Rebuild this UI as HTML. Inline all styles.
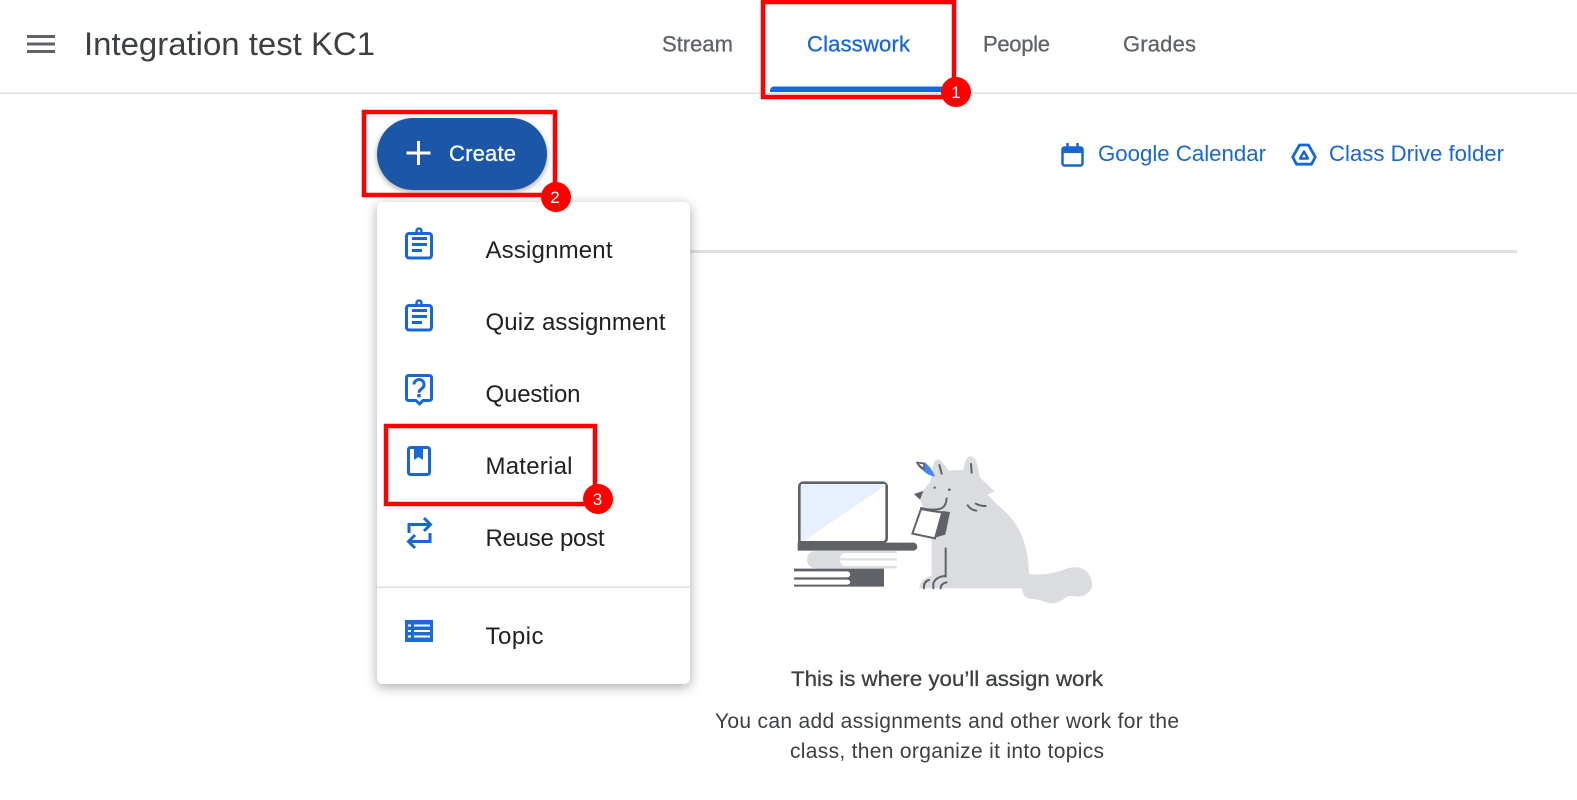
<!DOCTYPE html>
<html><head><meta charset="utf-8"><style>
html,body{margin:0;padding:0;background:#fff;width:1577px;height:800px;overflow:hidden}
svg{display:block}
text{font-family:"Liberation Sans",sans-serif}
.m{stroke-width:.3px}
</style></head><body>
<svg width="1577" height="800" viewBox="0 0 1577 800" xmlns="http://www.w3.org/2000/svg">
<defs>
<g id="clip"><rect x="406.500" y="233.500" width="25" height="24.500" rx="2.500" fill="none" stroke="#1967d2" stroke-width="3"/><circle cx="419" cy="231" r="2.500" fill="#fff" stroke="#1967d2" stroke-width="2.500"/><path d="M412 238.500h15M412 244.500h15M412 250.500h10" stroke="#1967d2" stroke-width="3" fill="none"/></g>
</defs>
<rect x="0" y="92.500" width="1577" height="1.500" fill="#e0e0e0"/>
<path d="M27 36.500h28M27 44h28M27 51.500h28" stroke="#5f6368" stroke-width="3" fill="none"/>
<text x="84" y="55" font-size="32" fill="#3c4043" textLength="291" lengthAdjust="spacingAndGlyphs">Integration test KC1</text>
<g font-size="22" fill="#5f6368" stroke="#5f6368" class="m">
<text x="662" y="51.500" textLength="71">Stream</text>
<text x="983" y="51.500" textLength="67">People</text>
<text x="1123" y="51.500" textLength="73">Grades</text>
</g>
<text x="807" y="51.500" font-size="22" fill="#1967d2" stroke="#1967d2" class="m" textLength="103">Classwork</text>
<path d="M770 92v-1.500a4 4 0 0 1 4-4h176v5.500z" fill="#1967d2"/>

<rect x="377" y="118" width="170" height="72" rx="36" fill="#1c57a7" style="filter:drop-shadow(0 2px 3px rgba(60,64,67,.45))"/>
<path d="M418.500 141v24M406.500 153h24" stroke="#fff" stroke-width="3" fill="none"/>
<text x="449" y="161" font-size="22" fill="#fff" stroke="#fff" class="m" textLength="67">Create</text>

<path d="M1062.500 149.500a2 2 0 0 1 2-2h16a2 2 0 0 1 2 2v14a2 2 0 0 1-2 2h-16a2 2 0 0 1-2-2z" fill="none" stroke="#1967d2" stroke-width="2.500"/>
<rect x="1062" y="147" width="21" height="6" fill="#1967d2"/>
<path d="M1067.500 143v5M1077.500 143v5" stroke="#1967d2" stroke-width="2.500"/>
<text x="1098" y="161" font-size="22.500" fill="#1967d2" textLength="168" lengthAdjust="spacingAndGlyphs">Google Calendar</text>
<path d="M1299.500 145h9l6.800 12-3.800 7.200h-15l-3.800-7.200z" fill="none" stroke="#1967d2" stroke-width="2.800" stroke-linejoin="round"/>
<path d="M1304 151.500l4 7h-8z" fill="none" stroke="#1967d2" stroke-width="2.400" stroke-linejoin="round"/>
<text x="1329" y="161" font-size="22.500" fill="#1967d2" textLength="175" lengthAdjust="spacingAndGlyphs">Class Drive folder</text>

<rect x="690" y="250" width="827" height="3" fill="#e0e0e0"/>

<rect x="377" y="202" width="313" height="482" rx="6" fill="#fff" style="filter:drop-shadow(0 3px 6px rgba(60,64,67,.45))"/>
<rect x="377" y="586.500" width="313" height="1.500" fill="#e0e0e0"/>
<g font-size="24" fill="#202124">
<text x="485.500" y="258" textLength="127">Assignment</text>
<text x="485.500" y="330" textLength="180">Quiz assignment</text>
<text x="485.500" y="402" textLength="95">Question</text>
<text x="485.500" y="474" textLength="87">Material</text>
<text x="485.500" y="546" textLength="119">Reuse post</text>
<text x="485.500" y="644" textLength="58">Topic</text>
</g>
<use href="#clip"/>
<use href="#clip" y="72"/>
<path d="M408.500 375.500h21a2 2 0 0 1 2 2v21a2 2 0 0 1-2 2h-6.500l-3.500 3.500-3.500-3.500h-7.500a2 2 0 0 1-2-2v-21a2 2 0 0 1 2-2z" fill="none" stroke="#1967d2" stroke-width="3" stroke-linejoin="round"/>
<path d="M414 384.500a5 5 0 1 1 8 4c-1.800 1.300-3 2-3 4.200" fill="none" stroke="#1967d2" stroke-width="3"/>
<rect x="417.300" y="394" width="3.400" height="3.400" fill="#1967d2"/>
<rect x="408.500" y="447.500" width="21" height="27" rx="2" fill="none" stroke="#1967d2" stroke-width="3"/>
<path d="M414 447h9v13l-4.500-3-4.500 3z" fill="#1967d2"/>
<path d="M409 533v-8.500h21M424 518l6.500 6.500-6.500 6.500M430 533v8.500h-21M415 535l-6.500 6.500 6.500 6.500" fill="none" stroke="#1967d2" stroke-width="3"/>
<rect x="405" y="620" width="28" height="22" fill="#1f6bd4"/>
<path d="M414 625.500h16M414 631h16M414 636.500h16M408 625.500h3M408 631h3M408 636.500h3" stroke="#fff" stroke-width="2" fill="none"/>

<g transform="translate(780 440) scale(.33333)">
<path d="M58 305V140a12 12 0 0 1 12-12h238a12 12 0 0 1 12 12v155a12 12 0 0 1-12 12H58z" fill="#fff" stroke="#5f6368" stroke-width="8"/>
<path d="M63 132h253v4L72 303h-9z" fill="#e8f0fe"/>
<path d="M53 308h347a12 12 0 0 1 0 24H53z" fill="#5f6368"/>
<path d="M350 333H108c-36 0-36 52 0 52h242z" fill="#dadce0"/>
<path d="M350 339H196c-22 0-22 39 0 39h154z" fill="#fff"/>
<path d="M180 358h170" stroke="#e0e2e5" stroke-width="7"/>
<path d="M42 386h270v54H42v-6h158c14 0 14-15 0-15H42v-7h158c14 0 14-18 0-18H42z" fill="#5f6368"/>
</g>

<g transform="translate(900 440) scale(.33333)">
<path d="M92 125L100 72Q112 45 130 70L146 92L190 90L196 62Q212 36 228 62L240 112L284 155L262 164L295 197Q385 265 387 402C430 408 470 398 500 386C530 376 555 384 568 405C585 430 575 462 545 468C530 472 515 466 505 468C490 478 475 490 458 490C440 490 420 478 402 477C378 478 366 465 367 445H58Q58 420 95 406V290L130 215L72 208L60 178L42 165L70 150Z" fill="#dadce0"/>
<path d="M118 75l7 26M213 72l2 26M203 196q10 14 26 16M227 191q16 8 30 7M140 175q-2 28-22 32-25 5-55-3M137 325v85" fill="none" stroke="#5f6368" stroke-width="6" stroke-linecap="round"/>
<path d="M100 445v-15q8-20 35-22M72 445q-2-20 15-25M122 445q0-14 18-18" fill="none" stroke="#5f6368" stroke-width="6" stroke-linecap="round"/>
<path d="M42 162l28-9-10 26z" fill="#5f6368"/>
<circle cx="104" cy="143" r="3.500" fill="#5f6368"/><circle cx="148" cy="149" r="4" fill="#5f6368"/>
<path d="M63 207l-26 74 68 14 22-78q-30-3-64-10z" fill="#fff" stroke="#5f6368" stroke-width="6"/>
<path d="M128 213l22 3-14 68-28 8z" fill="#5f6368"/>
<path d="M74 67Q95 82 105 110Q82 106 68 90z" fill="#4285f4"/>
<path d="M47 65L76 68L72 92Q55 85 47 65z" fill="#5f6368"/><path d="M56 71l14 2-1 9z" fill="#fff"/>
</g>

<text x="791" y="686" font-size="21.500" fill="#3c4043" stroke="#3c4043" class="m" textLength="312" lengthAdjust="spacingAndGlyphs">This is where you’ll assign work</text>
<text x="715" y="728" font-size="21" fill="#3c4043" textLength="464">You can add assignments and other work for the</text>
<text x="790" y="758" font-size="21" fill="#3c4043" textLength="314">class, then organize it into topics</text>

<g fill="none" stroke="#ff0000" stroke-width="4.500">
<rect x="763" y="2" width="191" height="95"/>
<rect x="364" y="112" width="191" height="83"/>
<rect x="386" y="426" width="209" height="78"/>
</g>
<g fill="#ff0000"><circle cx="956" cy="92" r="15"/><circle cx="556" cy="197" r="15"/><circle cx="598" cy="499" r="15"/></g>
<g fill="#fff" font-size="17" text-anchor="middle">
<text x="956" y="98">1</text><text x="555" y="203">2</text><text x="597.500" y="505">3</text>
</g>
</svg>
</body></html>
